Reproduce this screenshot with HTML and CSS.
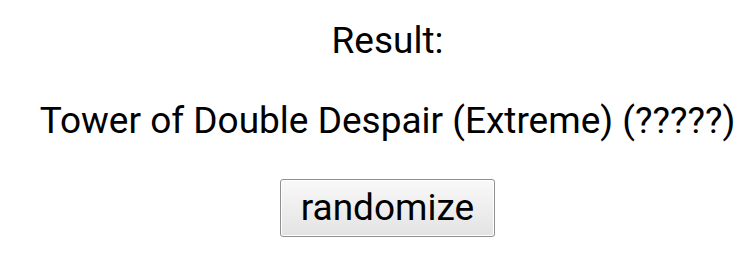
FILE: index.html
```html
<!DOCTYPE html>
<html lang="en">
<head>
  <meta charset="UTF-8">
  <title>Randomizer</title>
  <link rel="stylesheet" href="styles.css">
</head>
<body>
  <div class="randomizer">
    <p class="label">Result:</p>
    <p class="result" id="result">Tower of Double Despair (Extreme) (?????)</p>
    <button id="randomize">randomize</button>
  </div>
</body>
</html>
```
FILE: styles.css
```css
body {
  margin: 0;
  font-family: Roboto, "Noto Sans", sans-serif;
  color: #000;
  background: #fff;
}

.randomizer {
  text-align: center;
  padding: 20px 0 0 20px;
}

.label,
.result {
  margin: 0;
  font-size: 37px;
  line-height: 42px;
}

.result {
  margin-top: 38px;
}

#randomize {
  margin-top: 37px;
  font-family: Roboto, "Noto Sans", sans-serif;
  font-size: 37px;
  line-height: 42px;
  padding: 7px 20px;
  background: linear-gradient(#f9f9f9, #e3e3e3);
  border: 1px solid #8f8f8f;
  border-radius: 3px;
  color: #000;
  box-shadow: inset 0 0 0 1px #fff;
}
```
